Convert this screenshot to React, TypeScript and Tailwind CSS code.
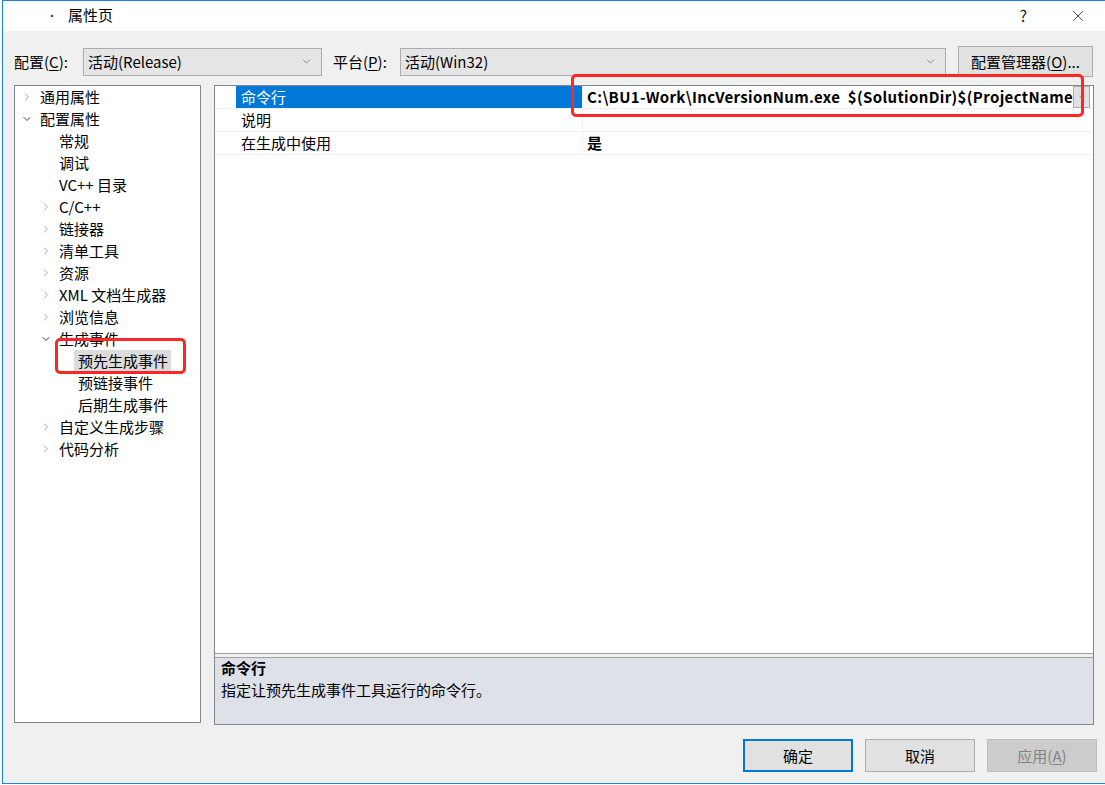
import { ChevronDown, ChevronRight, X } from "lucide-react";

type Node = { label: string; level: number; kind: "open" | "closed" | "leaf"; selected?: boolean };

const TREE: Node[] = [
  { label: "通用属性", level: 0, kind: "closed" },
  { label: "配置属性", level: 0, kind: "open" },
  { label: "常规", level: 1, kind: "leaf" },
  { label: "调试", level: 1, kind: "leaf" },
  { label: "VC++ 目录", level: 1, kind: "leaf" },
  { label: "C/C++", level: 1, kind: "closed" },
  { label: "链接器", level: 1, kind: "closed" },
  { label: "清单工具", level: 1, kind: "closed" },
  { label: "资源", level: 1, kind: "closed" },
  { label: "XML 文档生成器", level: 1, kind: "closed" },
  { label: "浏览信息", level: 1, kind: "closed" },
  { label: "生成事件", level: 1, kind: "open" },
  { label: "预先生成事件", level: 2, kind: "leaf", selected: true },
  { label: "预链接事件", level: 2, kind: "leaf" },
  { label: "后期生成事件", level: 2, kind: "leaf" },
  { label: "自定义生成步骤", level: 1, kind: "closed" },
  { label: "代码分析", level: 1, kind: "closed" },
];

const FONT = "font-['Noto_Sans_CJK_SC','Noto_Sans',sans-serif]";

function TreeRow({ node }: { node: Node }) {
  const indent = node.level === 0 ? "pl-[6px]" : node.level === 1 ? "pl-[25px]" : "pl-[44px]";
  return (
    <div className={`flex h-[22px] items-center leading-[20px] ${indent}`}>
      <span className="flex w-[12px] items-center justify-center">
        {node.kind === "closed" && <ChevronRight size={14} strokeWidth={2} className="text-[#a6a6a6]" />}
        {node.kind === "open" && <ChevronDown size={14} strokeWidth={2} className="text-[#404040]" />}
      </span>
      <span
        className={
          node.selected
            ? "ml-[3px] flex h-[22px] items-center bg-[#dcdcdc] px-[4px] pr-[3px]"
            : "ml-[7px]"
        }
      >
        {node.label}
      </span>
    </div>
  );
}

function Combo({ text, width }: { text: string; width: string }) {
  return (
    <div
      className={`flex h-[28px] items-center justify-between border border-[#adadad] bg-[#e5e5e5] pl-[4px] pr-[8px] ${width}`}
    >
      <span>{text}</span>
      <ChevronDown size={13} strokeWidth={1.2} className="text-[#555]" />
    </div>
  );
}

function Button({
  children,
  kind = "normal",
}: {
  children: React.ReactNode;
  kind?: "normal" | "default" | "disabled";
}) {
  const cls =
    kind === "default"
      ? "border-2 border-[#0078d7] bg-[#e1e1e1] text-black"
      : kind === "disabled"
        ? "border border-[#bfbfbf] bg-[#cccccc] text-[#838383]"
        : "border border-[#adadad] bg-[#e1e1e1] text-black";
  return (
    <div className={`flex h-[33px] w-[110px] items-center justify-center leading-[20px] ${cls}`}>{children}</div>
  );
}

export default function App() {
  return (
    <div className={`relative h-[785px] w-[1105px] overflow-hidden bg-white pl-[2px] text-[15px] text-black ${FONT}`}>
      <div className="flex h-[784px] flex-col border border-r-0 border-[#1883d7] bg-[#f0f0f0]">
        {/* title bar */}
        <div className="flex h-[30px] items-center bg-white leading-[20px]">
          <span className="ml-[46px] text-[12px] leading-none text-[#333]">˙</span>
          <span className="-mt-[2px] ml-[13px]">属性页</span>
          <span className="-mt-[2px] ml-auto text-[16px] text-[#222]">?</span>
          <X size={18} strokeWidth={1.1} className="ml-[42px] mr-[18px] text-[#222]" />
        </div>

        {/* configuration row */}
        <div className="mt-[15px] flex items-center pl-[11px] leading-[20px]">
          <span className="w-[69px]">
            配置(<span className="underline underline-offset-2">C</span>):
          </span>
          <Combo text="活动(Release)" width="w-[239px]" />
          <span className="ml-[11px] w-[67px]">
            平台(<span className="underline underline-offset-2">P</span>):
          </span>
          <Combo text="活动(Win32)" width="w-[546px]" />
          <div className="ml-[12px] flex h-[31px] w-[135px] items-center justify-center border border-[#adadad] bg-[#e1e1e1]">
            配置管理器(<span className="underline underline-offset-2">O</span>)...
          </div>
        </div>

        {/* panels */}
        <div className="mt-[8px] flex pl-[11px] leading-[20px]">
          <div className="h-[638px] w-[187px] border border-[#828790] bg-white">
            {TREE.map((n) => (
              <TreeRow key={n.label} node={n} />
            ))}
          </div>

          <div className="ml-[13px] flex h-[640px] w-[880px] flex-col border border-[#828790] bg-[#f0f0f0]">
            <div className="flex-1 border-b border-[#a0a0a0] bg-white">
              <div className="flex h-[23px] border-b border-[#f0f0f0]">
                <div className="w-[21px]" />
                <div className="flex w-[346px] items-center bg-[#0078d7] pl-[5px] text-white">命令行</div>
                <div className="flex flex-1 items-center border-l border-[#f0f0f0] pl-[4px]">
                  <span className="w-[486px] overflow-hidden whitespace-pre font-bold tracking-[0.35px]">
                    C:\BU1-Work\IncVersionNum.exe  $(SolutionDir)$(ProjectName
                  </span>
                  <div className="flex h-[22px] w-[17px] items-center justify-center border border-[#adadad] bg-[#e1e1e1]">
                    <ChevronDown size={10} strokeWidth={1.3} className="text-[#666]" />
                  </div>
                </div>
              </div>
              <div className="flex h-[23px] border-b border-[#f0f0f0]">
                <div className="w-[21px]" />
                <div className="flex w-[346px] items-center pl-[5px]">说明</div>
                <div className="flex-1 border-l border-[#f0f0f0]" />
              </div>
              <div className="flex h-[23px] border-b border-[#f0f0f0]">
                <div className="w-[21px]" />
                <div className="flex w-[346px] items-center pl-[5px]">在生成中使用</div>
                <div className="flex flex-1 items-center border-l border-[#f0f0f0] pl-[4px] font-bold">是</div>
              </div>
            </div>
            <div className="mt-[3px] h-[67px] border-t border-[#a0a0a0] bg-[#dee1e7] px-[6px]">
              <div className="h-[22px] font-bold">命令行</div>
              <div className="h-[22px]">指定让预先生成事件工具运行的命令行。</div>
            </div>
          </div>
        </div>

        {/* dialog buttons */}
        <div className="mt-[14px] flex w-[1094px] justify-end gap-[12px]">
          <Button kind="default">确定</Button>
          <Button>取消</Button>
          <Button kind="disabled">
            应用(<span className="underline underline-offset-2">A</span>)
          </Button>
        </div>
      </div>

      {/* red annotation boxes */}
      <div className="pointer-events-none absolute left-[571px] top-[74px] h-[43px] w-[513px] rounded-[5px] border-[3px] border-[#ff2626]" />
      <div className="pointer-events-none absolute left-[55px] top-[338px] h-[36px] w-[131px] rounded-[5px] border-[3px] border-[#ff2626]" />
    </div>
  );
}
